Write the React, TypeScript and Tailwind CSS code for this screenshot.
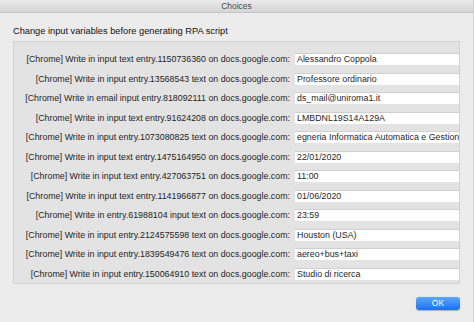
import React from "react";

const rows: { label: string; value: string }[] = [
  { label: "[Chrome] Write in input text entry.1150736360 on docs.google.com:", value: "Alessandro Coppola" },
  { label: "[Chrome] Write in input entry.13568543 text on docs.google.com:", value: "Professore ordinario" },
  { label: "[Chrome] Write in email input entry.818092111 on docs.google.com:", value: "ds_mail@uniroma1.it" },
  { label: "[Chrome] Write in input text entry.91624208 on docs.google.com:", value: "LMBDNL19S14A129A" },
  { label: "[Chrome] Write in input entry.1073080825 text on docs.google.com:", value: "egneria Informatica Automatica e Gestionale" },
  { label: "[Chrome] Write in input text entry.1475164950 on docs.google.com:", value: "22/01/2020" },
  { label: "[Chrome] Write in input text entry.427063751 on docs.google.com:", value: "11:00" },
  { label: "[Chrome] Write in input text entry.1141966877 on docs.google.com:", value: "01/06/2020" },
  { label: "[Chrome] Write in entry.61988104 input text on docs.google.com:", value: "23:59" },
  { label: "[Chrome] Write in input entry.2124575598 text on docs.google.com:", value: "Houston (USA)" },
  { label: "[Chrome] Write in input entry.1839549476 text on docs.google.com:", value: "aereo+bus+taxi" },
  { label: "[Chrome] Write in input entry.150064910 text on docs.google.com:", value: "Studio di ricerca" },
];

export default function App() {
  return (
    <div className="w-[474px] h-[322px] bg-[#ececec] overflow-hidden text-[#1f1f1f] font-['Liberation_Sans',Arial,sans-serif] text-[8.85px] leading-[12px] border-r border-[#cfcfcf]">
      {/* title bar */}
      <div className="h-[13px] bg-gradient-to-b from-[#ebebeb] to-[#d5d5d5] border-b border-[#c4c4c4] flex items-center justify-center text-[#4a4a4a] text-[8.5px]">
        Choices
      </div>

      <div className="px-[13px]">
        <div className="mt-[12px] h-[12px] text-[#111] text-[9.25px]">
          Change input variables before generating RPA script
        </div>

        {/* panel */}
        <div className="mt-[4px] bg-[#e3e3e3] border border-[#d2d2d2] pt-[11px] pb-[3px] flex flex-col gap-[7.5px]">
          {rows.map((r, i) => (
            <div key={i} className="flex items-center h-[12px]">
              <div className="flex-1 text-right pr-[5px] whitespace-nowrap">{r.label}</div>
              <div className="w-[164px] h-[12px] bg-white border-t border-[#cfcfcf] pl-[2px] overflow-hidden whitespace-nowrap leading-[11px]">
                {r.value}
              </div>
            </div>
          ))}
        </div>

        <div className="flex justify-end mt-[13px]">
          <button className="w-[44px] h-[13px] rounded-[3px] bg-gradient-to-b from-[#5aa8fb] to-[#1b6ff0] text-white text-[8.5px] leading-[13px] shadow-[0_0.5px_1px_rgba(0,0,0,0.25)]">
            OK
          </button>
        </div>
      </div>
    </div>
  );
}
